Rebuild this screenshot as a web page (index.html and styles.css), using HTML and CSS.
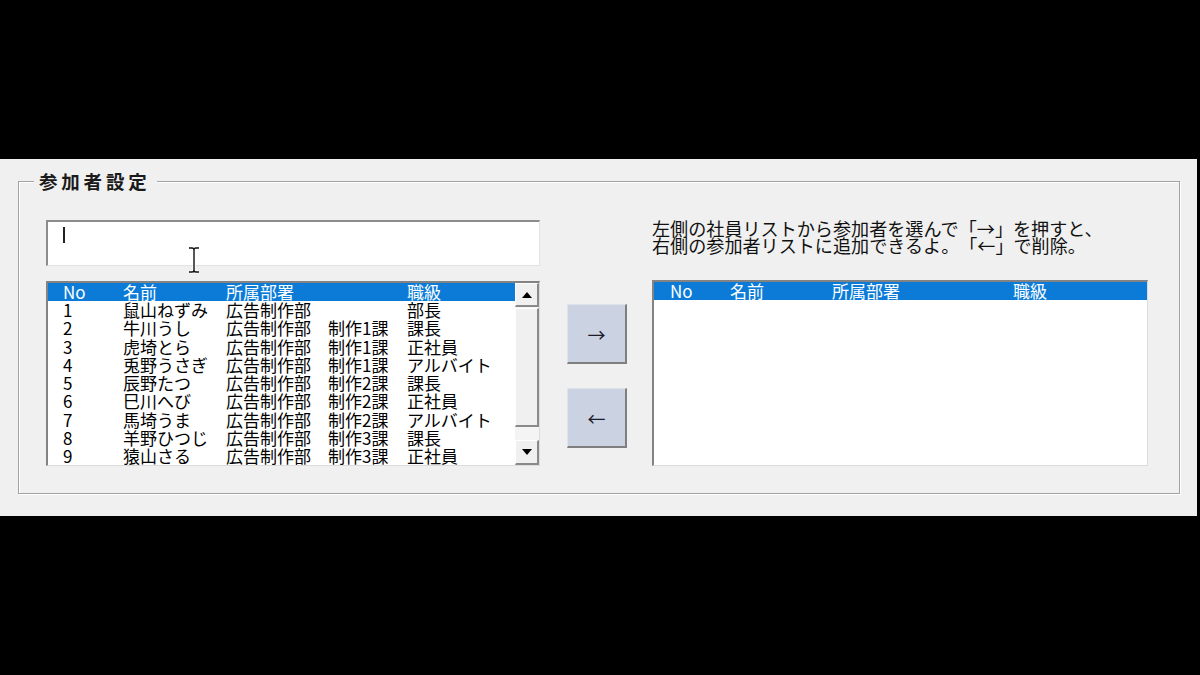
FILE: index.html
```html
<!DOCTYPE html>
<html lang="ja">
<head>
<meta charset="utf-8">
<title>参加者設定</title>
<link rel="stylesheet" href="styles.css">
</head>
<body>
<div class="screen">
  <div class="panel">
    <div class="group">
      <div class="legend">参加者設定</div>
      <div class="content">
        <div class="left-col">
          <div class="textbox"><span class="caret"></span></div>
          <div class="listbox">
            <div class="list-body">
              <div class="row head"><span>No</span><span>名前</span><span>所属部署</span><span></span><span>職級</span></div>
              <div class="row"><span>1</span><span>鼠山ねずみ</span><span>広告制作部</span><span></span><span>部長</span></div>
              <div class="row"><span>2</span><span>牛川うし</span><span>広告制作部</span><span>制作1課</span><span>課長</span></div>
              <div class="row"><span>3</span><span>虎埼とら</span><span>広告制作部</span><span>制作1課</span><span>正社員</span></div>
              <div class="row"><span>4</span><span>兎野うさぎ</span><span>広告制作部</span><span>制作1課</span><span>アルバイト</span></div>
              <div class="row"><span>5</span><span>辰野たつ</span><span>広告制作部</span><span>制作2課</span><span>課長</span></div>
              <div class="row"><span>6</span><span>巳川へび</span><span>広告制作部</span><span>制作2課</span><span>正社員</span></div>
              <div class="row"><span>7</span><span>馬埼うま</span><span>広告制作部</span><span>制作2課</span><span>アルバイト</span></div>
              <div class="row"><span>8</span><span>羊野ひつじ</span><span>広告制作部</span><span>制作3課</span><span>課長</span></div>
              <div class="row"><span>9</span><span>猿山さる</span><span>広告制作部</span><span>制作3課</span><span>正社員</span></div>
            </div>
            <div class="scrollbar">
              <div class="sb-btn up"><svg width="10" height="6" viewBox="0 0 10 6"><path d="M0 6 L5 0 L10 6 Z" fill="#000"/></svg></div>
              <div class="sb-thumb"></div>
              <div class="sb-track"></div>
              <div class="sb-btn down"><svg width="10" height="6" viewBox="0 0 10 6"><path d="M0 0 L10 0 L5 6 Z" fill="#000"/></svg></div>
            </div>
          </div>
        </div>
        <div class="btn-col">
          <button class="move">→</button>
          <button class="move">←</button>
        </div>
        <div class="right-col">
          <p class="hint">左側の社員リストから参加者を選んで「→」を押すと、<br>右側の参加者リストに追加できるよ。「←」で削除。</p>
          <div class="listbox right">
            <div class="list-body">
              <div class="row head"><span>No</span><span>名前</span><span>所属部署</span><span>職級</span></div>
            </div>
          </div>
        </div>
      </div>
    </div>
  </div>
  <svg class="ibeam" width="14" height="28" viewBox="0 0 14 28">
    <path d="M2 2 H5 Q7 2 7 4 Q7 2 9 2 H12 M7 4 V24 M2 26 H5 Q7 26 7 24 Q7 26 9 26 H12" fill="none" stroke="#fff" stroke-width="3.2"/>
    <path d="M2 2 H5 Q7 2 7 4 Q7 2 9 2 H12 M7 4 V24 M2 26 H5 Q7 26 7 24 Q7 26 9 26 H12" fill="none" stroke="#111" stroke-width="1.4"/>
  </svg>
</div>
</body>
</html>
```
FILE: styles.css
```css
html, body {
  margin: 0;
  padding: 0;
  background: #000;
}

.screen {
  position: relative;
  width: 1200px;
  height: 675px;
  overflow: hidden;
  background: #000;
  font-family: "Noto Sans CJK JP", "Noto Sans", sans-serif;
  color: #000;
  text-spacing-trim: space-all;
}

.panel {
  margin-top: 159px;
  width: 1197px;
  height: 357px;
  box-sizing: border-box;
  background: #f0f0f0;
  padding: 22px 17px 22px 18px;
}

.group {
  position: relative;
  box-sizing: border-box;
  height: 100%;
  border: 1px solid #a3a3a3;
  box-shadow: inset 1px 1px 0 #ffffff, 1px 1px 0 #ffffff;
  padding: 38px 31px 27px 27px;
}

.legend {
  position: absolute;
  top: -13px;
  left: 15px;
  padding: 0 6px 0 5px;
  background: #f0f0f0;
  font-size: 18.5px;
  line-height: 24px;
  font-weight: 700;
  letter-spacing: 3.8px;
  color: #1a1a1a;
}

.content {
  display: flex;
  height: 100%;
}

.left-col {
  width: 494px;
  display: flex;
  flex-direction: column;
  gap: 15px;
}

.textbox {
  height: 46px;
  box-sizing: border-box;
  background: #fff;
  border-top: 2px solid #8c8c8c;
  border-left: 2px solid #8c8c8c;
  border-right: 1px solid #e2e2e2;
  border-bottom: 1px solid #e2e2e2;
  padding: 5px 0 0 15px;
}

.caret {
  display: block;
  width: 2px;
  height: 16px;
  background: #222;
}

.listbox {
  height: 185px;
  box-sizing: border-box;
  background: #fff;
  border-top: 2px solid #838383;
  border-left: 2px solid #838383;
  border-right: 1px solid #dcdcdc;
  border-bottom: 1px solid #dcdcdc;
  display: flex;
  overflow: hidden;
}

.listbox.right {
  height: 186px;
}

.list-body {
  flex: 1;
  overflow: hidden;
  font-size: 17px;
}

.row {
  display: grid;
  grid-template-columns: 60px 103px 102px 79px 1fr;
  padding-left: 15px;
  height: 18.3px;
  line-height: 18.3px;
  white-space: nowrap;
}

.row.head {
  height: 18px;
  line-height: 18px;
  background: #0c7bd8;
  color: #fff;
}

.right .row {
  grid-template-columns: 60px 102px 181px 1fr;
  padding-left: 16px;
}

.scrollbar {
  width: 24px;
  display: flex;
  flex-direction: column;
  background: #f4f4f4;
}

.sb-btn,
.sb-thumb {
  box-sizing: border-box;
  background: #f0f0f0;
  border-top: 1px solid #fff;
  border-left: 1px solid #fff;
  border-right: 2px solid #8a8a8a;
  border-bottom: 2px solid #8a8a8a;
}

.sb-btn {
  height: 24px;
  display: flex;
  align-items: center;
  justify-content: center;
}

.sb-btn.down {
  height: 25px;
}

.sb-thumb {
  height: 119px;
  margin-top: 1px;
}

.sb-track {
  flex: 1;
}

.btn-col {
  width: 60px;
  margin-left: 27px;
  padding-top: 84px;
  display: flex;
  flex-direction: column;
  gap: 24px;
}

.move {
  width: 60px;
  height: 60px;
  box-sizing: border-box;
  padding: 0;
  margin: 0;
  background: #cbd2e2;
  border-top: 1px solid #dfe3ec;
  border-left: 1px solid #dfe3ec;
  border-right: 2px solid #7f7f7f;
  border-bottom: 2px solid #7f7f7f;
  font-family: "Noto Sans CJK JP", sans-serif;
  font-size: 18px;
  line-height: 20px;
  color: #1c1c2a;
}

.right-col {
  width: 496px;
  margin-left: 25px;
  display: flex;
  flex-direction: column;
}

.hint {
  margin: 0;
  height: 60px;
  font-size: 18.1px;
  line-height: 16.5px;
  color: #111;
  white-space: nowrap;
  text-spacing-trim: space-all;
}

.ibeam {
  position: absolute;
  left: 187px;
  top: 246px;
}
```
